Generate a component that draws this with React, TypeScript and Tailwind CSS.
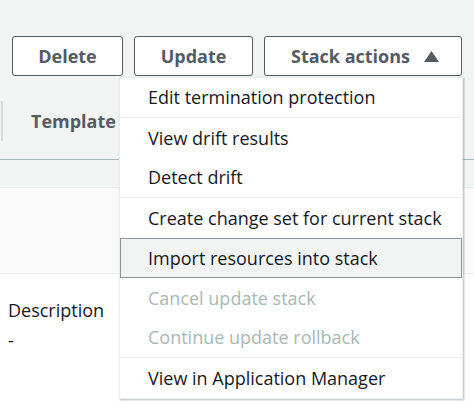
import { ReactNode } from 'react'

type MenuItem = {
  label: string
  disabled?: boolean
  highlighted?: boolean
  divider?: boolean
}

const menuItems: MenuItem[] = [
  { label: 'Edit termination protection', divider: true },
  { label: 'View drift results' },
  { label: 'Detect drift', divider: true },
  { label: 'Create change set for current stack' },
  { label: 'Import resources into stack', highlighted: true },
  { label: 'Cancel update stack', disabled: true },
  { label: 'Continue update rollback', disabled: true, divider: true },
  { label: 'View in Application Manager' }
]

function ActionButton({ children, className }: { children: ReactNode; className?: string }) {
  return (
    <button
      className={`h-10 rounded-[3px] border border-[#545b64] bg-white text-[18px] font-bold text-[#545b64] flex items-center justify-center ${className ?? ''}`}
    >
      {children}
    </button>
  )
}

function App() {
  return (
    <div
      className="w-[474px] h-[416px] overflow-hidden bg-white text-[#16191f]"
      style={{ fontFamily: '"Open Sans", "Noto Sans", sans-serif' }}
    >
      <div className="bg-[#f2f3f3]">
        <div className="flex gap-[11px] pl-3 pt-9">
          <ActionButton className="w-[111px]">Delete</ActionButton>
          <ActionButton className="w-[119px]">Update</ActionButton>
          <div className="relative">
            <ActionButton className="w-[198px] gap-[14px] pl-1">
              <span>Stack actions</span>
              <svg width="15" height="11" viewBox="0 0 15 11" className="mt-[1px]">
                <path d="M7.5 0 L15 11 L0 11 Z" fill="#545b64" />
              </svg>
            </ActionButton>
            <div className="absolute right-[-1px] top-[41px] z-10 w-[344px] border border-[#eaeded] bg-white shadow-[1px_1px_2px_rgba(0,28,36,0.3)]">
              {menuItems.map((item) => (
                <div
                  key={item.label}
                  className={`h-10 flex items-center pl-7 text-[18px] ${
                    item.highlighted
                      ? 'border border-[#879596] bg-[#f2f3f3] pl-[27px]'
                      : ''
                  } ${item.divider ? 'border-b border-b-[#eaeded]' : ''} ${
                    item.disabled ? 'text-[#aab7b8]' : 'text-[#16191f]'
                  }`}
                >
                  {item.label}
                </div>
              ))}
            </div>
          </div>
        </div>
        <div className="h-[84px] flex items-end border-b border-[#aab7b8] pb-[18px]">
          <div className="h-10 border-l-2 border-[#d5dbdb] ml-[1px] flex items-center pl-7 text-[18px] font-bold text-[#545b64]">
            Template
          </div>
        </div>
      </div>
      <div className="h-[28px] bg-[#f2f3f3] border-b border-[#eaeded]" />
      <div className="h-[86px] bg-[#fafafa] border-b border-[#eaeded]" />
      <div className="pl-2 pt-[21px] text-[18px] leading-[30px]">
        <div>Description</div>
        <div>-</div>
      </div>
    </div>
  )
}

export default App
